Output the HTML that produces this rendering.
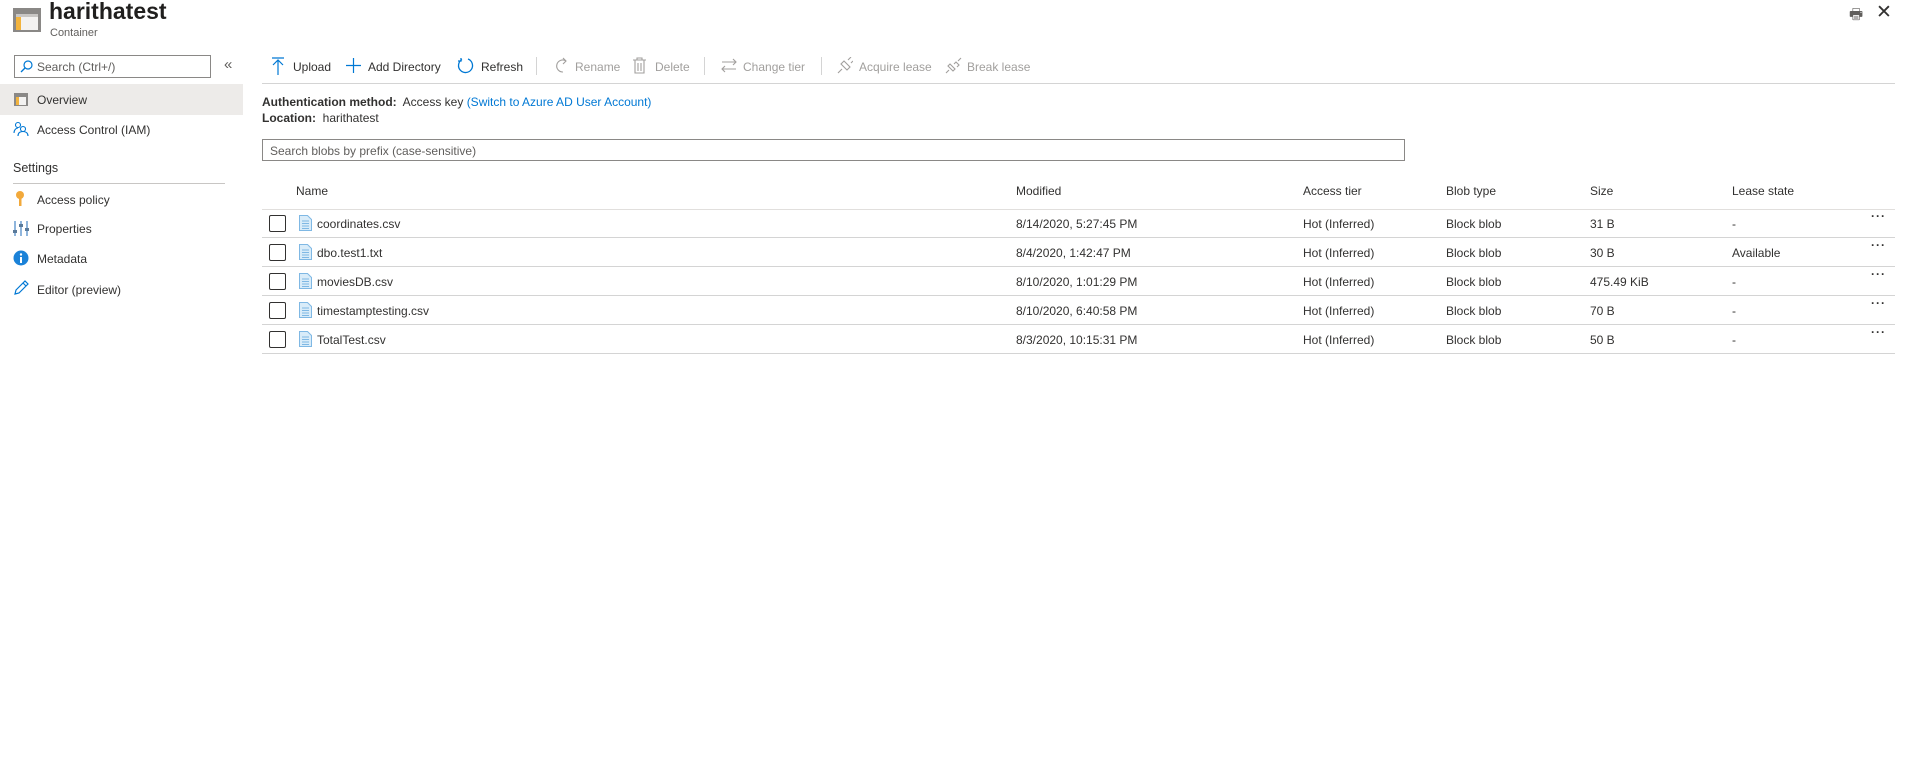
<!DOCTYPE html>
<html><head><meta charset="utf-8"><style>
*{margin:0;padding:0;box-sizing:border-box}
body{width:1913px;height:779px;background:#fff;font-family:"Liberation Sans",sans-serif;color:#323130;font-size:12px;position:relative;overflow:hidden}
.a{position:absolute;white-space:nowrap}
.g{color:#a19f9d}
.hl{position:absolute;left:262px;width:1633px;height:1px;background:#d4d4d4}
svg{position:absolute}
</style></head><body>
<svg style="left:13px;top:8px" width="28" height="24"><rect x="0" y="0" width="28" height="24" fill="#8a8886"/><rect x="3" y="6" width="22" height="16" fill="#f3f2f1"/><rect x="3" y="6" width="5" height="16" fill="#f2b33d"/><rect x="3" y="6" width="22" height="3" fill="#c8c6c4"/></svg>
<div class="a" style="left:49px;top:-2px;font-size:23px;font-weight:bold;color:#201f1e">harithatest</div>
<div class="a" style="left:50px;top:27px;font-size:11px;color:#605e5c">Container</div>
<div class="a" style="left:1849px;top:4px;font-size:15px;color:#605e5c">&#x1F5B6;</div>
<div class="a" style="left:1876px;top:1px;font-size:19px;color:#323130">✕</div>

<div class="a" style="left:14px;top:55px;width:197px;height:23px;border:1px solid #8a8886"></div>
<svg style="left:20px;top:60px" width="13" height="13"><circle cx="8" cy="5" r="4" fill="none" stroke="#0078d4" stroke-width="1.2"/><line x1="5" y1="8" x2="1" y2="12" stroke="#0078d4" stroke-width="1.3"/></svg>
<div class="a" style="left:37px;top:60px;color:#605e5c">Search (Ctrl+/)</div>
<div class="a" style="left:224px;top:56px;font-size:15px;color:#605e5c">«</div>
<div class="a" style="left:0;top:84px;width:243px;height:31px;background:#edebe9"></div>
<svg style="left:14px;top:93px" width="14" height="13"><rect width="14" height="13" fill="#8a8886"/><rect x="2" y="4" width="10" height="8" fill="#f3f2f1"/><rect x="2" y="4" width="3" height="8" fill="#f2b33d"/></svg>
<div class="a" style="left:37px;top:93px">Overview</div>
<svg style="left:13px;top:121px" width="16" height="16" fill="none" stroke="#0078d4" stroke-width="1.1"><circle cx="5" cy="4" r="2.5"/><path d="M1 12c0-3 2-5 4-5"/><circle cx="10" cy="8" r="2.5"/><path d="M5 15c0-3 2-4.5 5-4.5s5 1.5 5 4.5"/></svg>
<div class="a" style="left:37px;top:123px">Access Control (IAM)</div>
<div class="a" style="left:13px;top:161px;font-size:12.5px;color:#323130">Settings</div>
<div class="a" style="left:13px;top:183px;width:212px;height:1px;background:#c8c6c4"></div>
<svg style="left:15px;top:191px" width="10" height="16"><circle cx="5" cy="4" r="4" fill="#f2a93b"/><rect x="4" y="6" width="2.5" height="9" fill="#f2a93b"/></svg>
<div class="a" style="left:37px;top:193px">Access policy</div>
<svg style="left:13px;top:221px" width="16" height="15"><rect x="1" y="0" width="2" height="15" fill="#8fb5dc"/><rect x="7" y="0" width="2" height="15" fill="#8fb5dc"/><rect x="13" y="0" width="2" height="15" fill="#8fb5dc"/><rect x="0" y="9" width="4" height="3" fill="#5a7a9a"/><rect x="6" y="3" width="4" height="3" fill="#5a7a9a"/><rect x="12" y="7" width="4" height="3" fill="#5a7a9a"/></svg>
<div class="a" style="left:37px;top:222px">Properties</div>
<svg style="left:13px;top:250px" width="16" height="16"><circle cx="8" cy="8" r="7.5" fill="#1b82d8"/><rect x="7" y="7" width="2" height="6" fill="#fff"/><circle cx="8" cy="4.5" r="1.2" fill="#fff"/></svg>
<div class="a" style="left:37px;top:252px">Metadata</div>
<svg style="left:13px;top:280px" width="16" height="16" fill="none" stroke="#0078d4" stroke-width="1.2"><path d="M2 14l1-4 9-9 3 3-9 9z M10 3l3 3"/></svg>
<div class="a" style="left:37px;top:283px">Editor (preview)</div>

<svg style="left:271px;top:57px" width="14" height="18" fill="none" stroke="#0078d4" stroke-width="1.2"><path d="M1 1h12M7 3v15M2 8l5-5 5 5"/></svg>
<div class="a" style="left:293px;top:60px">Upload</div>
<svg style="left:346px;top:58px" width="15" height="15" stroke="#0078d4" stroke-width="1.2"><path d="M7.5 0v15M0 7.5h15"/></svg>
<div class="a" style="left:368px;top:60px">Add Directory</div>
<svg style="left:457px;top:57px" width="17" height="17" fill="none" stroke="#0078d4" stroke-width="1.3"><path d="M5 2.5A7 7 0 1 0 11 2M4 1v3h-3"/></svg>
<div class="a" style="left:481px;top:60px">Refresh</div>
<div class="a" style="left:536px;top:57px;width:1px;height:18px;background:#d4d4d4"></div>
<svg style="left:554px;top:57px" width="15" height="17" fill="none" stroke="#a19f9d" stroke-width="1.1"><path d="M12 4A6 6 0 1 0 9 15M9 1l3 3-3 3"/></svg>
<div class="a g" style="left:575px;top:60px">Rename</div>
<svg style="left:633px;top:57px" width="13" height="17" fill="none" stroke="#a19f9d" stroke-width="1.1"><path d="M0 3h13M4 3V1h5v2M2 3v13h9V3M5 6v8M8 6v8"/></svg>
<div class="a g" style="left:655px;top:60px">Delete</div>
<div class="a" style="left:704px;top:57px;width:1px;height:18px;background:#d4d4d4"></div>
<svg style="left:721px;top:58px" width="16" height="15" fill="none" stroke="#a19f9d" stroke-width="1.1"><path d="M1 4h14M12 1l3 3-3 3M15 11H1M4 8l-3 3 3 3"/></svg>
<div class="a g" style="left:743px;top:60px">Change tier</div>
<div class="a" style="left:821px;top:57px;width:1px;height:18px;background:#d4d4d4"></div>
<svg style="left:837px;top:57px" width="16" height="17" fill="none" stroke="#a19f9d" stroke-width="1.1"><path d="M1 16l4-4M4 7l6 6 3-3-6-6zM11 3l3-3M14 6l2-2"/></svg>
<div class="a g" style="left:859px;top:60px">Acquire lease</div>
<svg style="left:945px;top:57px" width="17" height="17" fill="none" stroke="#a19f9d" stroke-width="1.1"><path d="M1 16l3-3M3 9l5 5 2-2-5-5zM9 7l2-2 3 3-2 2M13 4l3-3"/></svg>
<div class="a g" style="left:967px;top:60px">Break lease</div>
<div class="hl" style="top:83px"></div>

<div class="a" style="left:262px;top:95px;font-size:12px"><b style="font-weight:600">Authentication method:</b>&nbsp; Access key <span style="color:#0078d4">(Switch to Azure AD User Account)</span></div>
<div class="a" style="left:262px;top:111px;font-size:12px"><b style="font-weight:600">Location:</b>&nbsp; harithatest</div>
<div class="a" style="left:262px;top:139px;width:1143px;height:22px;border:1px solid #8a8886"></div>
<div class="a" style="left:270px;top:144px;font-size:12px;color:#605e5c">Search blobs by prefix (case-sensitive)</div>

<div class="a" style="left:296px;top:184px">Name</div>
<div class="a" style="left:1016px;top:184px">Modified</div>
<div class="a" style="left:1303px;top:184px">Access tier</div>
<div class="a" style="left:1446px;top:184px">Blob type</div>
<div class="a" style="left:1590px;top:184px">Size</div>
<div class="a" style="left:1732px;top:184px">Lease state</div>
<div class="hl" style="top:209px;background:#e1dfdd"></div>

<div class="a" style="left:0;top:209px;width:1913px">
<div style="position:relative;height:29px">
<div class="a" style="left:269px;top:6px;width:17px;height:17px;border:1px solid #323130;border-radius:2px"></div>
<svg style="left:299px;top:6px" width="13" height="16"><path d="M.5.5h8l4 4v11H.5z" fill="#d9ecf9" stroke="#7fb8e4"/><path d="M3 6h7M3 8.5h7M3 11h7M3 13.5h7" stroke="#7fb8e4"/></svg>
<div class="a" style="left:317px;top:8px">coordinates.csv</div><div class="a" style="left:1016px;top:8px">8/14/2020, 5:27:45 PM</div><div class="a" style="left:1303px;top:8px">Hot (Inferred)</div><div class="a" style="left:1446px;top:8px">Block blob</div><div class="a" style="left:1590px;top:8px">31 B</div><div class="a" style="left:1732px;top:8px">-</div><div class="a" style="left:1871px;top:0px;font-weight:bold;letter-spacing:1px">···</div>
<div class="hl" style="top:28px"></div></div>
<div style="position:relative;height:29px">
<div class="a" style="left:269px;top:6px;width:17px;height:17px;border:1px solid #323130;border-radius:2px"></div>
<svg style="left:299px;top:6px" width="13" height="16"><path d="M.5.5h8l4 4v11H.5z" fill="#d9ecf9" stroke="#7fb8e4"/><path d="M3 6h7M3 8.5h7M3 11h7M3 13.5h7" stroke="#7fb8e4"/></svg>
<div class="a" style="left:317px;top:8px">dbo.test1.txt</div><div class="a" style="left:1016px;top:8px">8/4/2020, 1:42:47 PM</div><div class="a" style="left:1303px;top:8px">Hot (Inferred)</div><div class="a" style="left:1446px;top:8px">Block blob</div><div class="a" style="left:1590px;top:8px">30 B</div><div class="a" style="left:1732px;top:8px">Available</div><div class="a" style="left:1871px;top:0px;font-weight:bold;letter-spacing:1px">···</div>
<div class="hl" style="top:28px"></div></div>
<div style="position:relative;height:29px">
<div class="a" style="left:269px;top:6px;width:17px;height:17px;border:1px solid #323130;border-radius:2px"></div>
<svg style="left:299px;top:6px" width="13" height="16"><path d="M.5.5h8l4 4v11H.5z" fill="#d9ecf9" stroke="#7fb8e4"/><path d="M3 6h7M3 8.5h7M3 11h7M3 13.5h7" stroke="#7fb8e4"/></svg>
<div class="a" style="left:317px;top:8px">moviesDB.csv</div><div class="a" style="left:1016px;top:8px">8/10/2020, 1:01:29 PM</div><div class="a" style="left:1303px;top:8px">Hot (Inferred)</div><div class="a" style="left:1446px;top:8px">Block blob</div><div class="a" style="left:1590px;top:8px">475.49 KiB</div><div class="a" style="left:1732px;top:8px">-</div><div class="a" style="left:1871px;top:0px;font-weight:bold;letter-spacing:1px">···</div>
<div class="hl" style="top:28px"></div></div>
<div style="position:relative;height:29px">
<div class="a" style="left:269px;top:6px;width:17px;height:17px;border:1px solid #323130;border-radius:2px"></div>
<svg style="left:299px;top:6px" width="13" height="16"><path d="M.5.5h8l4 4v11H.5z" fill="#d9ecf9" stroke="#7fb8e4"/><path d="M3 6h7M3 8.5h7M3 11h7M3 13.5h7" stroke="#7fb8e4"/></svg>
<div class="a" style="left:317px;top:8px">timestamptesting.csv</div><div class="a" style="left:1016px;top:8px">8/10/2020, 6:40:58 PM</div><div class="a" style="left:1303px;top:8px">Hot (Inferred)</div><div class="a" style="left:1446px;top:8px">Block blob</div><div class="a" style="left:1590px;top:8px">70 B</div><div class="a" style="left:1732px;top:8px">-</div><div class="a" style="left:1871px;top:0px;font-weight:bold;letter-spacing:1px">···</div>
<div class="hl" style="top:28px"></div></div>
<div style="position:relative;height:29px">
<div class="a" style="left:269px;top:6px;width:17px;height:17px;border:1px solid #323130;border-radius:2px"></div>
<svg style="left:299px;top:6px" width="13" height="16"><path d="M.5.5h8l4 4v11H.5z" fill="#d9ecf9" stroke="#7fb8e4"/><path d="M3 6h7M3 8.5h7M3 11h7M3 13.5h7" stroke="#7fb8e4"/></svg>
<div class="a" style="left:317px;top:8px">TotalTest.csv</div><div class="a" style="left:1016px;top:8px">8/3/2020, 10:15:31 PM</div><div class="a" style="left:1303px;top:8px">Hot (Inferred)</div><div class="a" style="left:1446px;top:8px">Block blob</div><div class="a" style="left:1590px;top:8px">50 B</div><div class="a" style="left:1732px;top:8px">-</div><div class="a" style="left:1871px;top:0px;font-weight:bold;letter-spacing:1px">···</div>
<div class="hl" style="top:28px"></div></div>
</div>
</body></html>
